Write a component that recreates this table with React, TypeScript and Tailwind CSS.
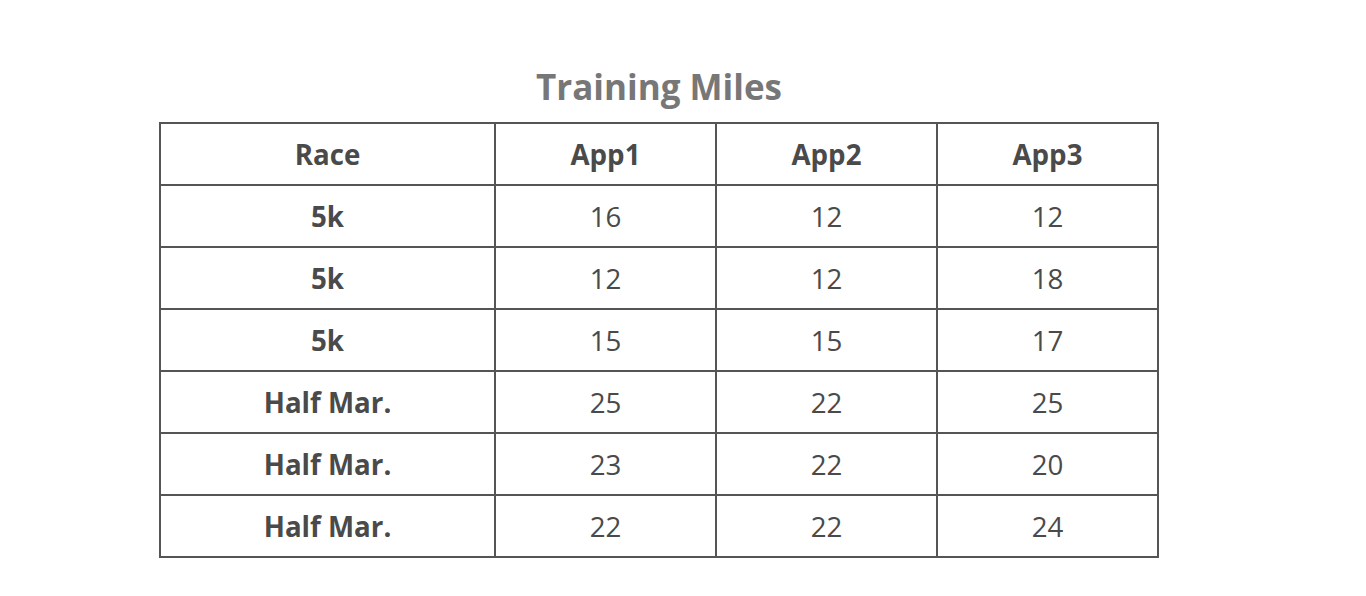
const ROWS = [
  ['5k', '16', '12', '12'],
  ['5k', '12', '12', '18'],
  ['5k', '15', '15', '17'],
  ['Half Mar.', '25', '22', '25'],
  ['Half Mar.', '23', '22', '20'],
  ['Half Mar.', '22', '22', '24'],
]

export default function App() {
  return (
    <div className="min-h-[596px] w-[1366px] bg-white font-['Open_Sans',sans-serif] text-[#4a4a4a]">
      <div className="ml-[159px] w-[1000px] pt-[64px]">
        <h2 className="text-center text-[35px] font-bold leading-[46px] text-[#777]">Training Miles</h2>
        <table className="mt-[12px] w-[1000px] table-fixed border-collapse text-[27.7px]">
          <colgroup>
            <col className="w-[335px]" />
            <col className="w-[221px]" />
            <col className="w-[221px]" />
            <col className="w-[221px]" />
          </colgroup>
          <thead>
            <tr className="h-[62px]">
              {['Race', 'App1', 'App2', 'App3'].map((h) => (
                <th key={h} className="border-2 border-[#555] p-0 pt-[2px] text-center font-bold">
                  {h}
                </th>
              ))}
            </tr>
          </thead>
          <tbody>
            {ROWS.map((r, i) => (
              <tr key={i} className="h-[62px]">
                <td className="border-2 border-[#555] p-0 pt-[2px] text-center font-bold">{r[0]}</td>
                {r.slice(1).map((v, j) => (
                  <td key={j} className="border-2 border-[#555] p-0 pt-[2px] text-center">
                    {v}
                  </td>
                ))}
              </tr>
            ))}
          </tbody>
        </table>
      </div>
    </div>
  )
}
